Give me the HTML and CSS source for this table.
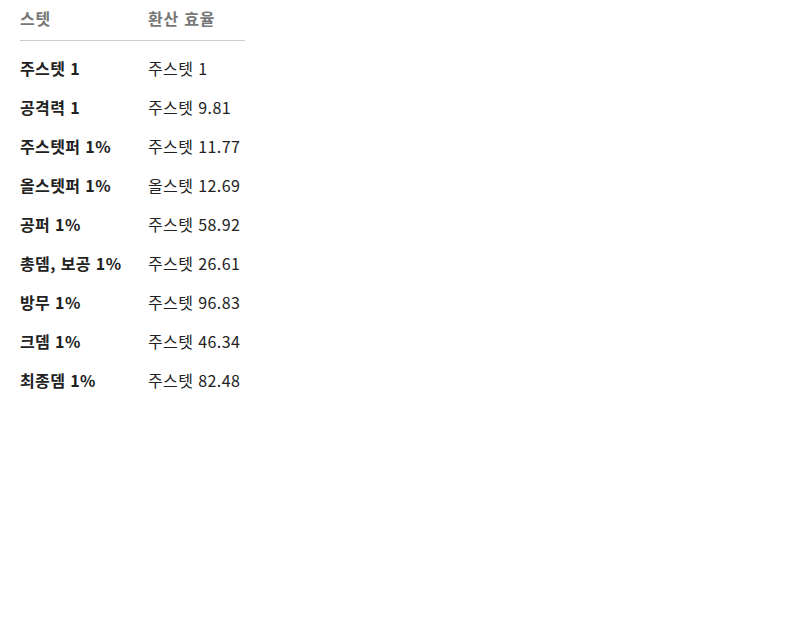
FILE: index.html
```html
<!DOCTYPE html>
<html lang="ko">
<head>
    <meta charset="UTF-8">
    <meta name="viewport" content="width=device-width, initial-scale=1.0">
    <title>스텟 환산 효율</title>
    <link rel="stylesheet" href="styles.css">
</head>
<body>
    <!-- 스텟 환산 효율 표 -->
    <table class="stat-table">
        <thead>
            <tr>
                <th>스텟</th>
                <th>환산 효율</th>
            </tr>
        </thead>
        <tbody>
            <tr><td class="name">주스텟 1</td><td>주스텟 1</td></tr>
            <tr><td class="name">공격력 1</td><td>주스텟 9.81</td></tr>
            <tr><td class="name">주스텟퍼 1%</td><td>주스텟 11.77</td></tr>
            <tr><td class="name">올스텟퍼 1%</td><td>올스텟 12.69</td></tr>
            <tr><td class="name">공퍼 1%</td><td>주스텟 58.92</td></tr>
            <tr><td class="name">총뎀, 보공 1%</td><td>주스텟 26.61</td></tr>
            <tr><td class="name">방무 1%</td><td>주스텟 96.83</td></tr>
            <tr><td class="name">크뎀 1%</td><td>주스텟 46.34</td></tr>
            <tr><td class="name">최종뎀 1%</td><td>주스텟 82.48</td></tr>
        </tbody>
    </table>
</body>
</html>
```

FILE: styles.css
```css
body {
    margin: 0;
    padding: 7px 20px;
    font-family: "Noto Sans CJK KR", "Noto Sans", sans-serif;
    font-size: 16px;
    color: #222;
    background: #fff;
}
.stat-table {
    border-collapse: collapse;
    width: 225px;
}
.stat-table th {
    text-align: left;
    font-weight: 600;
    color: #777;
    padding: 0 0 11px 0;
    line-height: 22px;
    letter-spacing: 0.8px;
    border-bottom: 1px solid #ccc;
}
.stat-table td {
    padding: 8px 0;
    line-height: 23px;
    letter-spacing: 0.4px;
    white-space: nowrap;
}
.stat-table tbody tr:first-child td {
    padding-top: 16px;
}
.stat-table td.name {
    font-weight: 700;
    width: 128px;
}
```
